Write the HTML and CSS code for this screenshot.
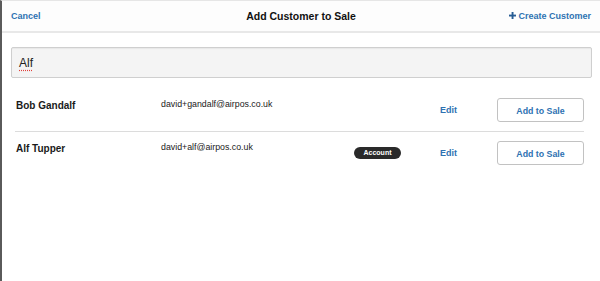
FILE: index.html
```html
<!DOCTYPE html>
<html>
<head>
<meta charset="utf-8">
<link rel="stylesheet" href="styles.css">
</head>
<body>
<div class="app">
  <header class="bar">
    <a class="link cancel">Cancel</a>
    <h1 class="title">Add Customer to Sale</h1>
    <a class="link create"><svg class="plus" width="7" height="7" viewBox="0 0 7 7"><rect x="2.6" y="0" width="1.9" height="7"/><rect x="0" y="2.6" width="7" height="1.9"/></svg>Create Customer</a>
  </header>
  <div class="search"><span class="typed">Alf</span></div>
  <ul class="list">
    <li class="row">
      <span class="name">Bob Gandalf</span>
      <span class="email">david+gandalf@airpos.co.uk</span>
      <span class="tag"></span>
      <a class="link edit">Edit</a>
      <button class="add">Add to Sale</button>
    </li>
    <li class="row">
      <span class="name">Alf Tupper</span>
      <span class="email">david+alf@airpos.co.uk</span>
      <span class="tag"><span class="badge">Account</span></span>
      <a class="link edit">Edit</a>
      <button class="add">Add to Sale</button>
    </li>
  </ul>
</div>
</body>
</html>
```
FILE: styles.css
```css
html, body {
  margin: 0;
  padding: 0;
  background: #ffffff;
}
body {
  width: 600px;
  height: 281px;
  overflow: hidden;
  font-family: "Liberation Sans", Arial, sans-serif;
  color: #1a1a1a;
}
.app {
  height: 281px;
  box-sizing: border-box;
  border-left: 2px solid #5a5a5a;
  border-top: 1px solid #e6e6e6;
}
.bar {
  height: 30px;
  display: flex;
  align-items: center;
  justify-content: space-between;
  padding: 0 9px 0 9px;
  border-bottom: 2px solid #e8e8e8;
  background: #fdfdfd;
}
.link {
  color: #2e72b2;
  font-weight: bold;
  font-size: 9px;
  text-decoration: none;
}
.cancel, .create {
  width: 120px;
}
.create {
  display: flex;
  align-items: center;
  justify-content: flex-end;
  gap: 2px;
}
.plus {
  fill: #285d94;
  margin-top: -1px;
}
.title {
  margin: 0;
  font-size: 10.5px;
  font-weight: bold;
  color: #111;
}
.search {
  margin: 14px 8px 0 9px;
  height: 29px;
  border: 1px solid #cfcfcf;
  border-radius: 2px;
  background: #f4f4f4;
  display: flex;
  align-items: center;
  padding-left: 7px;
  font-size: 12px;
  color: #222;
  box-shadow: inset 0 1px 1px rgba(0,0,0,0.05);
}
.typed {
  text-decoration: underline dotted #e0403a;
  text-underline-offset: 3px;
}
.list {
  list-style: none;
  margin: 9px 16px 0 13px;
  padding: 0;
}
.row {
  display: grid;
  grid-template-columns: 145px 193px 86px 57px 87px;
  align-items: start;
  padding: 11px 0 9px 1px;
}
.row + .row {
  border-top: 1px solid #dcdcdc;
  padding-top: 9px;
}
.name {
  font-weight: bold;
  font-size: 10px;
  line-height: 13px;
  margin-top: 1px;
}
.email {
  font-size: 8.8px;
  line-height: 11px;
  margin-top: 1px;
}
.badge {
  display: inline-block;
  height: 12px;
  width: 47px;
  line-height: 12px;
  border-radius: 6px;
  background: #2a2a2a;
  color: #fff;
  font-size: 7px;
  font-weight: bold;
  text-align: center;
}
.edit {
  margin-top: 6px;
  line-height: 12px;
}
.add {
  height: 24px;
  width: 87px;
  border: 1px solid #c2c2c2;
  border-radius: 3px;
  background: #fff;
  color: #2e72b2;
  font-family: "Liberation Sans", Arial, sans-serif;
  font-weight: bold;
  font-size: 8.8px;
  padding: 1px 0 0;
}
```
